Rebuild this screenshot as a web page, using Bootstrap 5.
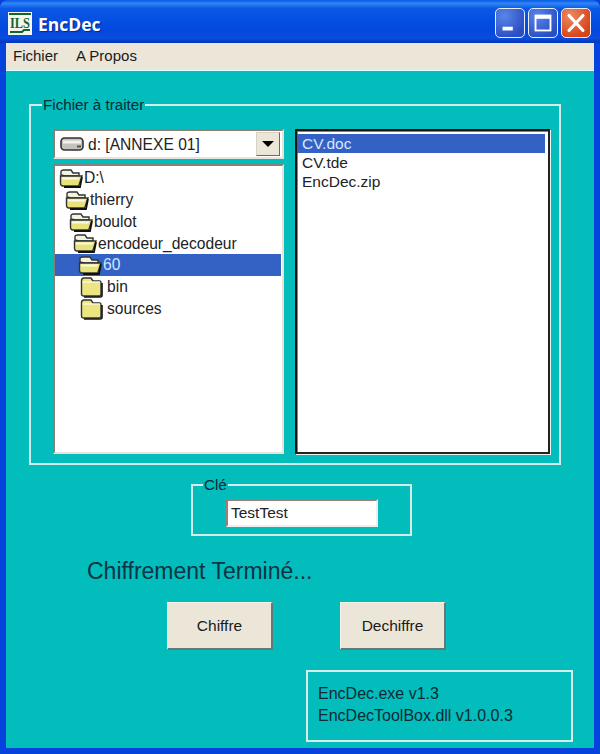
<!DOCTYPE html>
<html lang="fr">
<head>
    <meta charset="UTF-8">
    <meta name="viewport" content="width=device-width, initial-scale=1.0">
    <title>EncDec</title>
    <link href="https://cdn.jsdelivr.net/npm/bootstrap@5.3.0/dist/css/bootstrap.min.css" rel="stylesheet">
    <style>
        html, body { height: 100%; background: #0a3ed8; }
        body { font-family: "Liberation Sans", Arial, sans-serif; font-size: 15px; color: #10202a; overflow: hidden; }
        .xp-window { width: 600px; height: 754px; background: #0642dc; border-radius: 8px 8px 0 0; padding: 0 6px 6px; }
        .xp-title { height: 43px; margin: 0 -6px; padding: 3px 9px 0 8px; border-radius: 8px 8px 0 0;
            background: linear-gradient(180deg, #0a5ae6 0%, #2f86f4 8%, #0a58e6 20%, #0348dc 70%, #0a4ee0 88%, #0336bc 100%); }
        .xp-title-text { font-family: "Open Sans", "Liberation Sans", sans-serif; font-weight: 700; font-size: 17.5px; color: #fff; margin: 3px 0 0 6px; text-shadow: 1px 1px 1px #03268c; }
        .xp-logo { width: 24px; height: 23px; display: block; }
        .xp-btn { width: 30px; height: 30px; border: 1.5px solid #e6eefc; border-radius: 5px; background: radial-gradient(circle at 30% 25%, #5b85e8, #2a4fc4 75%); margin-left: 3px; display: block; }
        .xp-close { background: radial-gradient(circle at 30% 25%, #ec8a62, #d8431a 75%); }
        .xp-menu { height: 28px; background: #ece6d8; padding-left: 7px; border-bottom: 1px solid #dff; color: #1a1a1a; }
        .xp-menu span { margin-right: 18px; font-size: 15px; }
        .xp-client { height: 677px; background: #03bcbc; padding: 26px 0 0 23px; position: relative; }
        fieldset.xp-group { border: 2px solid #d4ecea; padding: 0; min-width: 0; }
        fieldset.xp-group legend { float: none; width: auto; font-size: 15.2px; line-height: 16px; padding: 0 1px; margin: 0 0 0 -11px; color: #0c2a33; }
        fieldset.xp-files { width: 532px; height: 368px; padding: 16px 9px 0 22px; margin: 0; }
        .xp-left { width: 231px; }
        .xp-sunken { background: #fff; border: 2px solid #8c7f78; border-right-color: #e8e4dc; border-bottom-color: #e8e4dc; }
        .xp-combo { height: 30px; padding-left: 5px; color: #222; font-size: 15.6px; }
        .xp-combo-label { padding-top: 2px; }
        .xp-combo-btn { width: 24px; height: 24px; margin: 0 2px 0 auto; background: #ece6d8; border: 1px solid #d8d2c4; border-right-color: #6e6a60; border-bottom-color: #6e6a60; }
        .xp-arrow { width: 0; height: 0; border-left: 6px solid transparent; border-right: 6px solid transparent; border-top: 6px solid #000; }
        .xp-tree { height: 290px; margin-top: 5px; padding-top: 1px; }
        .xp-node { height: 21.8px; font-size: 15.6px; color: #222; }
        .xp-node svg { flex: none; margin-right: 1px; }
        .xp-node.xp-sel { background: #3462c4; color: #cfe6ff; margin-right: 1px; }
        .xp-indent1 { padding-left: 4px; }
        .xp-indent2 { padding-left: 10px; }
        .xp-indent3 { padding-left: 14px; }
        .xp-indent4 { padding-left: 18px; }
        .xp-indent5 { padding-left: 23px; }
        .xp-node.xp-indent6 { padding-left: 24px; }
        .xp-node.xp-indent6 svg { margin-right: 4px; }
        .xp-filelist { width: 255px; height: 325px; margin-left: 11px; background: #fff; border: 2px solid #111; border-right-color: #222; border-bottom-color: #222; border-top-color: #111; padding-top: 3px; color: #222; font-size: 15.5px; box-shadow: inset 1px 1px 0 #8c7f78, 1px 1px 0 #e8f4f2; }
        .xp-file { height: 19px; line-height: 19px; padding-left: 5px; }
        .xp-file.xp-sel { background: #3462c4; color: #d6e8ff; margin-right: 3px; }
        fieldset.xp-key { width: 221px; height: 59px; margin: 12px 0 0 162px; padding: 0 0 0 33px; }
        fieldset.xp-key legend { margin-left: -23px; }
        .xp-input { width: 152px; height: 28px; margin-top: 6px; padding-left: 3px; font-size: 15.5px; color: #222; line-height: 24px; background: #fff; border: 2px solid #9c7f78; border-right-color: #eee; border-bottom-color: #eee; }
        .xp-status { font-size: 23px; line-height: 28px; margin: 21px 0 0 58px; color: #0b3444; }
        .xp-actions { margin: 17px 0 0 138px; gap: 67px; }
        .xp-actions .btn { width: 106px; height: 48px; padding: 0; background: #ece6d8; color: #1a1a1a; font-size: 15.5px; border: 1px solid #f6f2e8; border-right: 2px solid #5f7a78; border-bottom: 2px solid #5f7a78; border-radius: 0; }
        .xp-about { position: absolute; left: 300px; top: 599px; width: 267px; height: 72px; border: 2px solid #d8ecea; padding: 11px 0 0 10px; font-size: 16px; line-height: 22px; color: #0c2a33; }
    </style>
</head>
<body>
    <svg width="0" height="0" class="position-absolute">
        <symbol id="dossierOuvert" viewBox="0 0 24 22">
            <path d="M2 8 L2 5 Q2 3 5 3 L12 3 L14 6 L20 6 L20 9 L6 9 Z" fill="#f4f2e0" stroke="#333" stroke-width="1.400"/>
            <path d="M1.500 9 L19 9 L23 9 L20 18 Q20 19 18 19 L4 19 Q1.500 19 1.500 16 Z" fill="#e8e27a" stroke="#333" stroke-width="1.400"/>
            <path d="M3 10.500 L20 10.500 L19.500 12.500 L3 12.500 Z" fill="#fbfae8"/>
            <path d="M23 10 L21 20 L5 20" fill="none" stroke="#111" stroke-width="1.800"/>
        </symbol>
        <symbol id="dossierFerme" viewBox="0 0 24 22">
            <path d="M2.500 5 Q2.500 2 5 2 L12 2 L14 5 L21 5 Q22 5 22 7 L22 18 Q22 20 20 20 L5 20 Q2.500 20 2.500 18 Z" fill="#ece682" stroke="#333" stroke-width="1.400"/>
            <path d="M3.500 6 L21 6" stroke="#fdfbd8" stroke-width="1.300"/>
            <path d="M23 7 L23 20 Q23 21 21 21 L5 21" fill="none" stroke="#111" stroke-width="1.600"/>
        </symbol>
    </svg>

    <div class="xp-window d-flex flex-column">
        <!-- Barre de titre -->
        <div class="xp-title d-flex align-items-center">
            <svg class="xp-logo" viewBox="0 0 24 23">
                <rect width="24" height="23" fill="#f6f6ee"/>
                <rect x="1" y="1" width="22" height="2" fill="#12662c"/>
                <path d="M2 20 L14 20 L16 18 L22 18" fill="none" stroke="#12662c" stroke-width="2"/>
                <text x="2" y="16" font-family="Liberation Serif" font-weight="700" font-size="14" fill="#12662c" textLength="20" lengthAdjust="spacingAndGlyphs">ILS</text>
            </svg>
            <span class="xp-title-text">EncDec</span>
            <div class="ms-auto d-flex">
                <svg class="xp-btn" viewBox="0 0 30 30"><rect x="7" y="19" width="11" height="4" fill="#fff"/></svg>
                <svg class="xp-btn" viewBox="0 0 30 30"><rect x="7" y="7" width="16" height="16" fill="none" stroke="#fff" stroke-width="2"/><rect x="6.500" y="6.500" width="17" height="4" fill="#fff"/></svg>
                <svg class="xp-btn xp-close" viewBox="0 0 30 30"><path d="M7.500 7 L22.500 23 M22.500 7 L7.500 23" stroke="#fff" stroke-width="3.400" stroke-linecap="round"/></svg>
            </div>
        </div>

        <!-- Menu -->
        <div class="xp-menu d-flex align-items-center">
            <span>Fichier</span>
            <span>A Propos</span>
        </div>

        <div class="xp-client">
            <fieldset class="xp-group xp-files d-flex">
                <legend>Fichier à traiter</legend>
                <div class="d-flex">
                    <div class="xp-left">
                        <div class="xp-combo xp-sunken d-flex align-items-center">
                            <svg width="24" height="16" viewBox="0 0 24 16" class="me-1">
                                <rect x="1" y="2" width="22" height="12" rx="3.500" fill="#c4c2bc" stroke="#333" stroke-width="1.600"/>
                                <rect x="3" y="4.500" width="18" height="3" fill="#f2f2ec"/>
                                <rect x="17" y="9.500" width="4" height="2" fill="#555"/>
                            </svg>
                            <span class="xp-combo-label">d: [ANNEXE 01]</span>
                            <div class="xp-combo-btn d-flex align-items-center justify-content-center"><div class="xp-arrow"></div></div>
                        </div>
                        <div class="xp-tree xp-sunken">
                            <div class="xp-node xp-indent1 d-flex align-items-center"><svg width="24" height="22"><use href="#dossierOuvert"/></svg>D:\</div>
                            <div class="xp-node xp-indent2 d-flex align-items-center"><svg width="24" height="22"><use href="#dossierOuvert"/></svg>thierry</div>
                            <div class="xp-node xp-indent3 d-flex align-items-center"><svg width="24" height="22"><use href="#dossierOuvert"/></svg>boulot</div>
                            <div class="xp-node xp-indent4 d-flex align-items-center"><svg width="24" height="22"><use href="#dossierOuvert"/></svg>encodeur_decodeur</div>
                            <div class="xp-node xp-indent5 xp-sel d-flex align-items-center"><svg width="24" height="22"><use href="#dossierOuvert"/></svg>60</div>
                            <div class="xp-node xp-indent6 d-flex align-items-center"><svg width="24" height="22"><use href="#dossierFerme"/></svg>bin</div>
                            <div class="xp-node xp-indent6 d-flex align-items-center"><svg width="24" height="22"><use href="#dossierFerme"/></svg>sources</div>
                        </div>
                    </div>
                    <div class="xp-filelist">
                        <div class="xp-file xp-sel">CV.doc</div>
                        <div class="xp-file">CV.tde</div>
                        <div class="xp-file">EncDec.zip</div>
                    </div>
                </div>
            </fieldset>

            <fieldset class="xp-group xp-key">
                <legend>Clé</legend>
                <div class="xp-input">TestTest</div>
            </fieldset>

            <div class="xp-status">Chiffrement Terminé...</div>

            <div class="xp-actions d-flex">
                <button type="button" class="btn">Chiffre</button>
                <button type="button" class="btn">Dechiffre</button>
            </div>

            <div class="xp-about">EncDec.exe v1.3<br>EncDecToolBox.dll v1.0.0.3</div>
        </div>
    </div>
    <script src="https://cdn.jsdelivr.net/npm/bootstrap@5.3.0/dist/js/bootstrap.bundle.min.js"></script>
</body>
</html>
